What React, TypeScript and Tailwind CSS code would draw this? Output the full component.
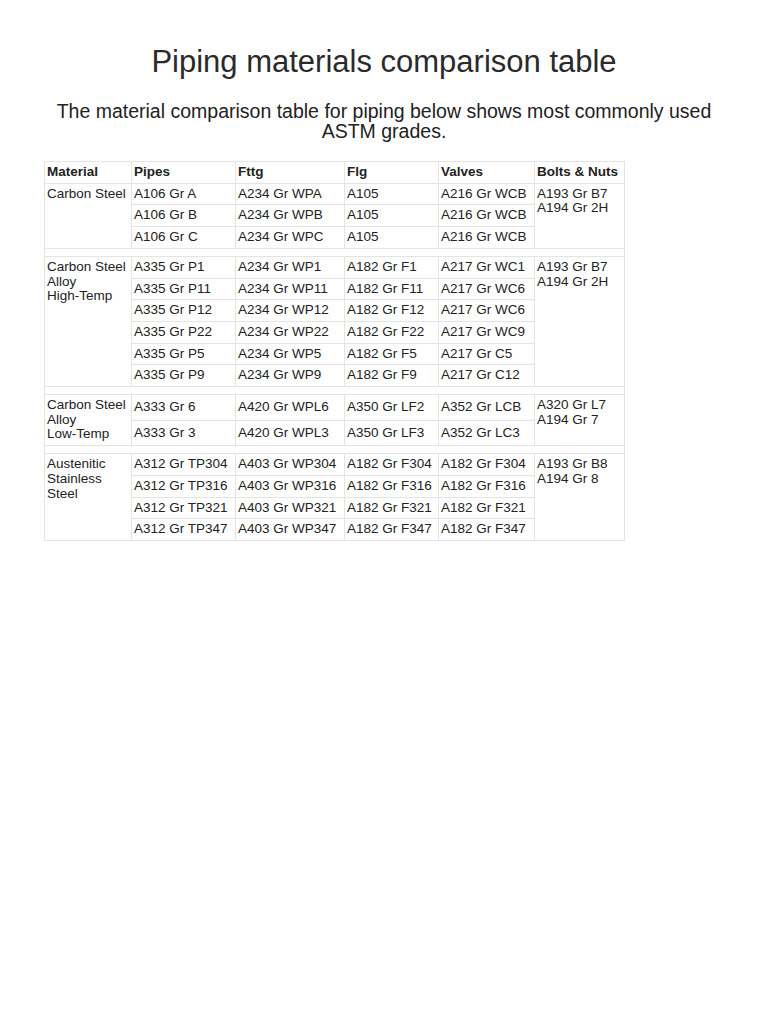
import React from 'react';

type Group = {
  material: string[];
  bolts: string[];
  rows: [string, string, string, string][];
};

const groups: Group[] = [
  {
    material: ['Carbon Steel'],
    bolts: ['A193 Gr B7', 'A194 Gr 2H'],
    rows: [
      ['A106 Gr A', 'A234 Gr WPA', 'A105', 'A216 Gr WCB'],
      ['A106 Gr B', 'A234 Gr WPB', 'A105', 'A216 Gr WCB'],
      ['A106 Gr C', 'A234 Gr WPC', 'A105', 'A216 Gr WCB'],
    ],
  },
  {
    material: ['Carbon Steel', 'Alloy', 'High-Temp'],
    bolts: ['A193 Gr B7', 'A194 Gr 2H'],
    rows: [
      ['A335 Gr P1', 'A234 Gr WP1', 'A182 Gr F1', 'A217 Gr WC1'],
      ['A335 Gr P11', 'A234 Gr WP11', 'A182 Gr F11', 'A217 Gr WC6'],
      ['A335 Gr P12', 'A234 Gr WP12', 'A182 Gr F12', 'A217 Gr WC6'],
      ['A335 Gr P22', 'A234 Gr WP22', 'A182 Gr F22', 'A217 Gr WC9'],
      ['A335 Gr P5', 'A234 Gr WP5', 'A182 Gr F5', 'A217 Gr C5'],
      ['A335 Gr P9', 'A234 Gr WP9', 'A182 Gr F9', 'A217 Gr C12'],
    ],
  },
  {
    material: ['Carbon Steel', 'Alloy', 'Low-Temp'],
    bolts: ['A320 Gr L7', 'A194 Gr 7'],
    rows: [
      ['A333 Gr 6', 'A420 Gr WPL6', 'A350 Gr LF2', 'A352 Gr LCB'],
      ['A333 Gr 3', 'A420 Gr WPL3', 'A350 Gr LF3', 'A352 Gr LC3'],
    ],
  },
  {
    material: ['Austenitic', 'Stainless', 'Steel'],
    bolts: ['A193 Gr B8', 'A194 Gr 8'],
    rows: [
      ['A312 Gr TP304', 'A403 Gr WP304', 'A182 Gr F304', 'A182 Gr F304'],
      ['A312 Gr TP316', 'A403 Gr WP316', 'A182 Gr F316', 'A182 Gr F316'],
      ['A312 Gr TP321', 'A403 Gr WP321', 'A182 Gr F321', 'A182 Gr F321'],
      ['A312 Gr TP347', 'A403 Gr WP347', 'A182 Gr F347', 'A182 Gr F347'],
    ],
  },
];

const headers = ['Material', 'Pipes', 'Fttg', 'Flg', 'Valves', 'Bolts & Nuts'];

const cell = 'border border-[#e4e4e4] px-[2px] py-[3px] text-left align-middle whitespace-nowrap';

export default function App() {
  return (
    <div className="min-h-screen bg-white text-[#222] font-['Liberation_Sans',Arial,sans-serif]">
      <h1 className="pt-[44px] text-center text-[31px] leading-[36px] font-normal text-[#2a2a2a]">
        Piping materials comparison table
      </h1>
      <p className="mt-[21px] mx-auto w-[680px] text-center text-[19.5px] leading-[20px] text-[#222]">
        The material comparison table for piping below shows most commonly used ASTM grades.
      </p>

      <table className="mt-[20px] ml-[44px] w-[580px] table-fixed border-collapse border border-[#e4e4e4] text-[13.5px] leading-[14.7px]">
        <colgroup>
          <col className="w-[87px]" />
          <col className="w-[104px]" />
          <col className="w-[109px]" />
          <col className="w-[94px]" />
          <col className="w-[96px]" />
          <col className="w-[90px]" />
        </colgroup>
        <thead>
          <tr>
            {headers.map((h) => (
              <th key={h} className={`${cell} font-bold`}>
                {h}
              </th>
            ))}
          </tr>
        </thead>
        <tbody>
          {groups.map((g, gi) => (
            <React.Fragment key={gi}>
              {gi > 0 && (
                <tr>
                  <td colSpan={6} className="border border-[#e4e4e4] h-[8px] p-0" />
                </tr>
              )}
              {g.rows.map((r, ri) => (
                <tr key={ri}>
                  {ri === 0 && (
                    <td rowSpan={g.rows.length} className={`${cell} !align-top`}>
                      {g.material.map((m) => (
                        <div key={m}>{m}</div>
                      ))}
                    </td>
                  )}
                  {r.map((v, vi) => (
                    <td key={vi} className={cell}>
                      {v}
                    </td>
                  ))}
                  {ri === 0 && (
                    <td rowSpan={g.rows.length} className={`${cell} !align-top`}>
                      {g.bolts.map((b) => (
                        <div key={b}>{b}</div>
                      ))}
                    </td>
                  )}
                </tr>
              ))}
            </React.Fragment>
          ))}
        </tbody>
      </table>
    </div>
  );
}
